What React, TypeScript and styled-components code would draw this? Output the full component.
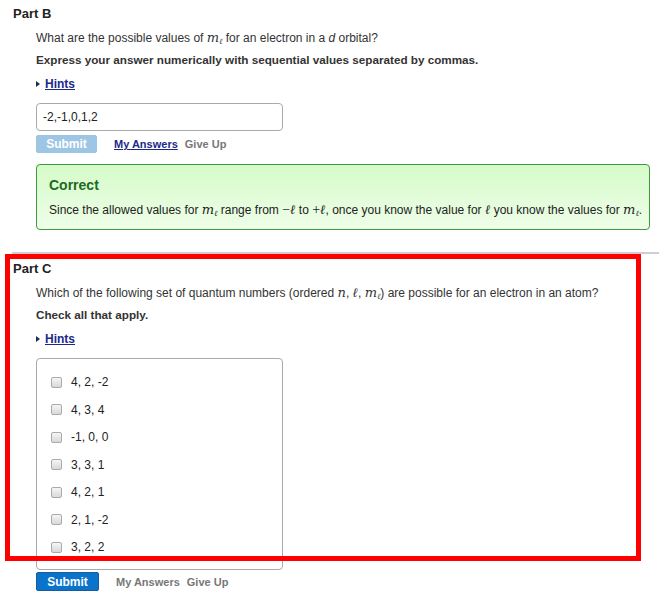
import React from "react";
import styled, { createGlobalStyle } from "styled-components";

const Global = createGlobalStyle`
  html, body { margin: 0; padding: 0; background: #fff; }
  body { font-family: "Liberation Sans", Arial, Helvetica, sans-serif; color: #333; font-size: 12px; }
  *, *::before, *::after { box-sizing: border-box; }
  #root { position: relative; width: 659px; min-height: 597px; }
`;

const Page = styled.div`
  position: relative;
  width: 659px;
  height: 597px;
  overflow: hidden;
`;

const Part = styled.section<{ $top: number }>`
  padding-top: ${(p) => p.$top}px;
`;

const PartTitle = styled.h2`
  margin: 0 0 0 13px;
  font-size: 13px;
  line-height: 16px;
  font-weight: bold;
  color: #222;
`;

const Body = styled.div`
  padding-left: 36px;
  display: flex;
  flex-direction: column;
  align-items: flex-start;
`;

const Prompt = styled.p`
  margin: 8px 0 0;
  font-size: 12px;
  line-height: 16px;
  color: #333;
`;

const Instruction = styled.p`
  margin: 6px 0 0;
  font-size: 11.7px;
  line-height: 16px;
  font-weight: bold;
  color: #333;
`;

const HintsRow = styled.div`
  margin-top: 8px;
  display: flex;
  align-items: center;
  gap: 5px;
  line-height: 16px;
`;

const Tri = styled.span`
  width: 0;
  height: 0;
  border-top: 3.5px solid transparent;
  border-bottom: 3.5px solid transparent;
  border-left: 4px solid #1e2a5a;
`;

const HintLink = styled.a`
  color: #1a2a8a;
  font-weight: bold;
  font-size: 12px;
  text-decoration: underline;
`;

const AnswerInput = styled.div`
  margin-top: 11px;
  width: 247px;
  height: 28px;
  border: 1px solid #aaa;
  border-radius: 4px;
  display: flex;
  align-items: center;
  padding-left: 6px;
  font-size: 12px;
  color: #222;
`;

const ButtonRow = styled.div<{ $mt: number }>`
  margin-top: ${(p) => p.$mt}px;
  display: flex;
  align-items: center;
`;

const SubmitButton = styled.button<{ $disabled?: boolean }>`
  width: ${(p) => (p.$disabled ? 61 : 63)}px;
  height: ${(p) => (p.$disabled ? 18 : 19)}px;
  padding: 0;
  border: 1px solid ${(p) => (p.$disabled ? "#9cc6e3" : "#1a5a9a")};
  border-radius: 2px;
  background: ${(p) => (p.$disabled ? "#9dc6e4" : "#0a73cc")};
  color: #fff;
  font-family: "Liberation Sans", Arial, sans-serif;
  font-size: 12px;
  font-weight: bold;
  line-height: 16px;
`;

const ActionLink = styled.a<{ $active?: boolean; $ml: number }>`
  margin-left: ${(p) => p.$ml}px;
  font-size: 11px;
  font-weight: bold;
  color: ${(p) => (p.$active ? "#1a2a8a" : "#777")};
  text-decoration: ${(p) => (p.$active ? "underline" : "none")};
`;

const CorrectBox = styled.div`
  margin-top: 11px;
  width: 614px;
  height: 66px;
  border: 1px solid #3c9b3c;
  border-radius: 4px;
  background: linear-gradient(#d5fbc8, #effee9);
  padding: 0 0 0 12px;
`;

const CorrectTitle = styled.div`
  margin-top: 11px;
  font-size: 14px;
  font-weight: bold;
  line-height: 18px;
  color: #1d6a1d;
`;

const CorrectText = styled.div`
  margin-top: 8px;
  font-size: 12px;
  line-height: 16px;
  color: #222;
  white-space: nowrap;
`;

const Mi = styled.span<{ $size?: number }>`
  font-family: "DejaVu Serif", "Liberation Serif", serif;
  font-style: italic;
  font-size: ${(p) => p.$size ?? 13}px;
`;

const Mo = styled.span`
  font-family: "Liberation Serif", serif;
  font-size: 14px;
`;

const Sub = styled.sub`
  vertical-align: -2px;
  line-height: 0;
`;

const Separator = styled.hr`
  margin: 22px 0 0 12px;
  border: 0;
  height: 2px;
  background: #cfcfcf;
`;

const OptionsBox = styled.div`
  margin-top: 11px;
  width: 247px;
  height: 212px;
  border: 1px solid #aaa;
  border-radius: 4px;
  padding: 15px 0 0 14px;
  display: flex;
  flex-direction: column;
  gap: 11.5px;
`;

const Option = styled.label`
  display: flex;
  align-items: center;
  gap: 9px;
  height: 16px;
  font-size: 12px;
  color: #222;
`;

const Check = styled.span`
  width: 11px;
  height: 11px;
  border: 1px solid #aaa;
  border-radius: 2px;
  background: linear-gradient(#f6f6f6, #d8d8d8);
`;

const Annotation = styled.div`
  position: absolute;
  left: 5px;
  top: 254px;
  width: 636px;
  height: 307px;
  border: 5px solid #ff0000;
  pointer-events: none;
`;

const Ml = () => (
  <>
    <Mi>m</Mi>
    <Sub>
      <Mi $size={8}>ℓ</Mi>
    </Sub>
  </>
);

const options = ["4, 2, -2", "4, 3, 4", "-1, 0, 0", "3, 3, 1", "4, 2, 1", "2, 1, -2", "3, 2, 2"];

export default function App() {
  return (
    <Page>
      <Global />
      <Part $top={6}>
        <PartTitle>Part B</PartTitle>
        <Body>
          <Prompt>
            What are the possible values of <Ml /> for an electron in a <i>d</i> orbital?
          </Prompt>
          <Instruction>Express your answer numerically with sequential values separated by commas.</Instruction>
          <HintsRow>
            <Tri />
            <HintLink>Hints</HintLink>
          </HintsRow>
          <AnswerInput>-2,-1,0,1,2</AnswerInput>
          <ButtonRow $mt={4}>
            <SubmitButton $disabled>Submit</SubmitButton>
            <ActionLink $active $ml={17}>My Answers</ActionLink>
            <ActionLink $ml={7}>Give Up</ActionLink>
          </ButtonRow>
          <CorrectBox>
            <CorrectTitle>Correct</CorrectTitle>
            <CorrectText>
              Since the allowed values for <Ml /> range from <Mo>−</Mo><Mi>ℓ</Mi> to <Mo>+</Mo><Mi>ℓ</Mi>, once you know the value for <Mi>ℓ</Mi> you know the values for <Ml />.
            </CorrectText>
          </CorrectBox>
        </Body>
        <Separator />
      </Part>
      <Part $top={7}>
        <PartTitle>Part C</PartTitle>
        <Body>
          <Prompt>
            Which of the following set of quantum numbers (ordered <Mi>n</Mi>, <Mi>ℓ</Mi>, <Ml />) are possible for an electron in an atom?
          </Prompt>
          <Instruction>Check all that apply.</Instruction>
          <HintsRow>
            <Tri />
            <HintLink>Hints</HintLink>
          </HintsRow>
          <OptionsBox>
            {options.map((o) => (
              <Option key={o}>
                <Check />
                {o}
              </Option>
            ))}
          </OptionsBox>
          <ButtonRow $mt={2}>
            <SubmitButton>Submit</SubmitButton>
            <ActionLink $ml={17}>My Answers</ActionLink>
            <ActionLink $ml={7}>Give Up</ActionLink>
          </ButtonRow>
        </Body>
      </Part>
      <Annotation />
    </Page>
  );
}
